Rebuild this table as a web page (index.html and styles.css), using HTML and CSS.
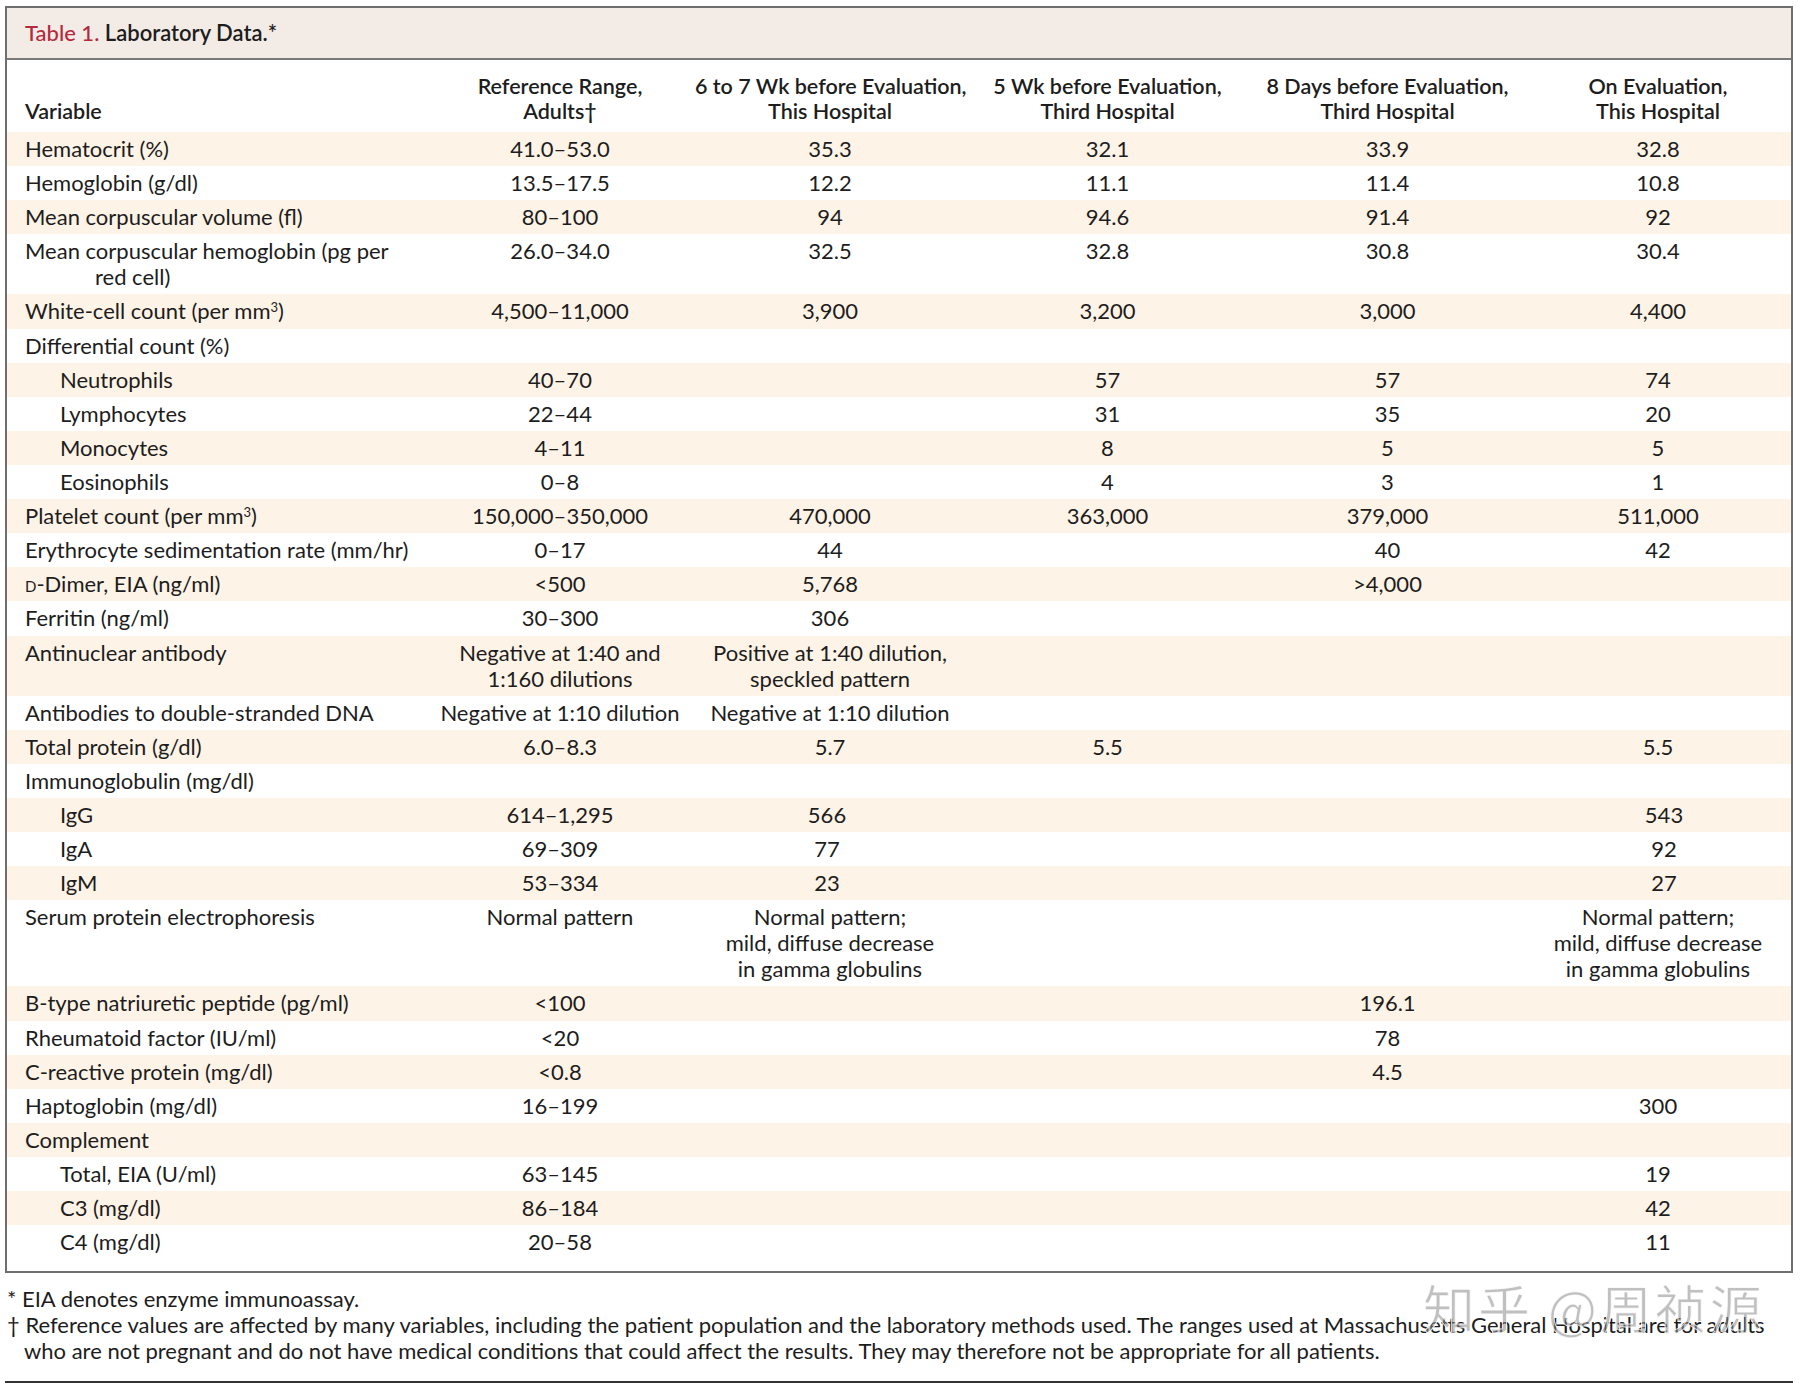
FILE: index.html
```html
<!DOCTYPE html>
<html lang="en">
<head>
    <meta charset="UTF-8">
    <title>Table 1. Laboratory Data</title>
    <link rel="stylesheet" href="styles.css">
</head>
<body>
    <div class="page">
        <div class="table-box">
            <div class="table-title"><span class="label">Table 1.</span> Laboratory Data.*</div>
            <table class="lab">
                <colgroup>
                    <col class="c-var">
                    <col class="c-ref">
                    <col class="c-a">
                    <col class="c-b">
                    <col class="c-c">
                    <col class="c-d">
                </colgroup>
                <thead>
                    <tr>
                        <th class="var">Variable</th>
                        <th>Reference Range,<br>Adults&dagger;</th>
                        <th>6 to 7 Wk before Evaluation,<br>This Hospital</th>
                        <th>5 Wk before Evaluation,<br>Third Hospital</th>
                        <th>8 Days before Evaluation,<br>Third Hospital</th>
                        <th>On Evaluation,<br>This Hospital</th>
                    </tr>
                </thead>
                <tbody>
                    <tr><td class="var">Hematocrit (%)</td><td>41.0–53.0</td><td>35.3</td><td>32.1</td><td>33.9</td><td>32.8</td></tr>
                    <tr><td class="var">Hemoglobin (g/dl)</td><td>13.5–17.5</td><td>12.2</td><td>11.1</td><td>11.4</td><td>10.8</td></tr>
                    <tr><td class="var">Mean corpuscular volume (fl)</td><td>80–100</td><td>94</td><td>94.6</td><td>91.4</td><td>92</td></tr>
                    <tr><td class="var">Mean corpuscular hemoglobin (pg per<br>red cell)</td><td>26.0–34.0</td><td>32.5</td><td>32.8</td><td>30.8</td><td>30.4</td></tr>
                    <tr><td class="var">White-cell count (per mm<sup>3</sup>)</td><td>4,500–11,000</td><td>3,900</td><td>3,200</td><td>3,000</td><td>4,400</td></tr>
                    <tr><td class="var">Differential count (%)</td><td></td><td></td><td></td><td></td><td></td></tr>
                    <tr><td class="var sub">Neutrophils</td><td>40–70</td><td></td><td>57</td><td>57</td><td>74</td></tr>
                    <tr><td class="var sub">Lymphocytes</td><td>22–44</td><td></td><td>31</td><td>35</td><td>20</td></tr>
                    <tr><td class="var sub">Monocytes</td><td>4–11</td><td></td><td>8</td><td>5</td><td>5</td></tr>
                    <tr><td class="var sub">Eosinophils</td><td>0–8</td><td></td><td>4</td><td>3</td><td>1</td></tr>
                    <tr><td class="var">Platelet count (per mm<sup>3</sup>)</td><td>150,000–350,000</td><td>470,000</td><td>363,000</td><td>379,000</td><td>511,000</td></tr>
                    <tr><td class="var">Erythrocyte sedimentation rate (mm/hr)</td><td>0–17</td><td>44</td><td></td><td>40</td><td>42</td></tr>
                    <tr><td class="var"><span class="sc">d</span>-Dimer, EIA (ng/ml)</td><td>&lt;500</td><td>5,768</td><td></td><td>&gt;4,000</td><td></td></tr>
                    <tr><td class="var">Ferritin (ng/ml)</td><td>30–300</td><td>306</td><td></td><td></td><td></td></tr>
                    <tr><td class="var">Antinuclear antibody</td><td>Negative at 1:40 and<br>1:160 dilutions</td><td>Positive at 1:40 dilution,<br>speckled pattern</td><td></td><td></td><td></td></tr>
                    <tr><td class="var">Antibodies to double-stranded DNA</td><td>Negative at 1:10 dilution</td><td>Negative at 1:10 dilution</td><td></td><td></td><td></td></tr>
                    <tr><td class="var">Total protein (g/dl)</td><td>6.0–8.3</td><td>5.7</td><td>5.5</td><td></td><td>5.5</td></tr>
                    <tr><td class="var">Immunoglobulin (mg/dl)</td><td></td><td></td><td></td><td></td><td></td></tr>
                    <tr><td class="var sub">IgG</td><td>614–1,295</td><td class="ig-a">566</td><td></td><td></td><td class="ig-d">543</td></tr>
                    <tr><td class="var sub">IgA</td><td>69–309</td><td class="ig-a">77</td><td></td><td></td><td class="ig-d">92</td></tr>
                    <tr><td class="var sub">IgM</td><td>53–334</td><td class="ig-a">23</td><td></td><td></td><td class="ig-d">27</td></tr>
                    <tr><td class="var">Serum protein electrophoresis</td><td>Normal pattern</td><td>Normal pattern;<br>mild, diffuse decrease<br>in gamma globulins</td><td></td><td></td><td>Normal pattern;<br>mild, diffuse decrease<br>in gamma globulins</td></tr>
                    <tr><td class="var">B-type natriuretic peptide (pg/ml)</td><td>&lt;100</td><td></td><td></td><td>196.1</td><td></td></tr>
                    <tr><td class="var">Rheumatoid factor (IU/ml)</td><td>&lt;20</td><td></td><td></td><td>78</td><td></td></tr>
                    <tr><td class="var">C-reactive protein (mg/dl)</td><td>&lt;0.8</td><td></td><td></td><td>4.5</td><td></td></tr>
                    <tr><td class="var">Haptoglobin (mg/dl)</td><td>16–199</td><td></td><td></td><td></td><td>300</td></tr>
                    <tr><td class="var">Complement</td><td></td><td></td><td></td><td></td><td></td></tr>
                    <tr><td class="var sub">Total, EIA (U/ml)</td><td>63–145</td><td></td><td></td><td></td><td>19</td></tr>
                    <tr><td class="var sub">C3 (mg/dl)</td><td>86–184</td><td></td><td></td><td></td><td>42</td></tr>
                    <tr><td class="var sub">C4 (mg/dl)</td><td>20–58</td><td></td><td></td><td></td><td>11</td></tr>
                </tbody>
            </table>
        </div>

        <div class="notes">
            <p>* EIA denotes enzyme immunoassay.</p>
            <p class="dagger">&dagger; Reference values are affected by many variables, including the patient population and the laboratory methods used. The ranges used at Massachusetts General Hospital are for adults<br>who are not pregnant and do not have medical conditions that could affect the results. They may therefore not be appropriate for all patients.</p>
            <div class="watermark">知乎 @周祯源</div>
        </div>
        <div class="rule"></div>
    </div>
</body>
</html>
```

FILE: styles.css
```css
*{
    margin: 0;
    padding: 0;
    box-sizing: border-box;
}
body{
    background-color: white;
    color: #1d1d1d;
    font-family: Lato, "Open Sans", sans-serif;
    font-size: 22px;
}
.page{
    padding: 6px 7px 0 5px;
}
.table-box{
    border: 2px solid #6e6e6e;
}
.table-title{
    background-color: #f3ece6;
    border-bottom: 2px solid #7a7a7a;
    height: 52px;
    padding: 11px 0 0 18px;
    font-size: 22px;
    font-weight: 600;
    line-height: 28px;
    color: #1d1d1d;
}
.table-title .label{
    color: #b42a3c;
    font-weight: 500;
}
table.lab{
    width: 100%;
    border-collapse: collapse;
    table-layout: fixed;
    margin-bottom: 12px;
}
.c-var{ width: 418px; }
.c-ref{ width: 270px; }
.c-a{ width: 270px; }
.c-b{ width: 285px; }
.c-c{ width: 275px; }
.c-d{ width: auto; }
th{
    font-size: 21.5px;
    font-weight: 600;
    line-height: 25px;
    padding: 14px 0 8px 0;
    vertical-align: bottom;
    text-align: center;
    white-space: nowrap;
}
td{
    line-height: 26px;
    padding: 4px 0 4.12px 0;
    text-align: center;
    vertical-align: top;
    white-space: nowrap;
}
th.var{
    text-align: left;
    padding-left: 18px;
}
td.var{
    text-align: left;
    padding-left: 88px;
    text-indent: -70px;
}
td.var.sub{
    text-indent: -35px;
}
td.ig-a{
    padding-right: 6px;
}
td.ig-d{
    padding-left: 12px;
}
tbody tr:nth-child(odd){
    background-color: #fdf3e6;
}
sup{
    font-size: 13px;
    line-height: 0;
    vertical-align: 7px;
}
.sc{
    font-variant: small-caps;
}
.notes{
    position: relative;
    margin-top: 13px;
    font-size: 22px;
    line-height: 26px;
    white-space: nowrap;
}
.notes p{
    padding-left: 2px;
}
.notes .dagger{
    padding-left: 19px;
    text-indent: -17px;
}
.watermark{
    position: absolute;
    left: 1418px;
    top: -10px;
    font-family: "Noto Sans CJK SC", sans-serif;
    font-size: 52px;
    line-height: 62px;
    letter-spacing: 3px;
    color: rgba(140, 140, 140, 0.55);
    -webkit-text-stroke: 1px rgba(255, 255, 255, 0.8);
}
.rule{
    margin-top: 17px;
    border-top: 2px solid #333;
}
```
